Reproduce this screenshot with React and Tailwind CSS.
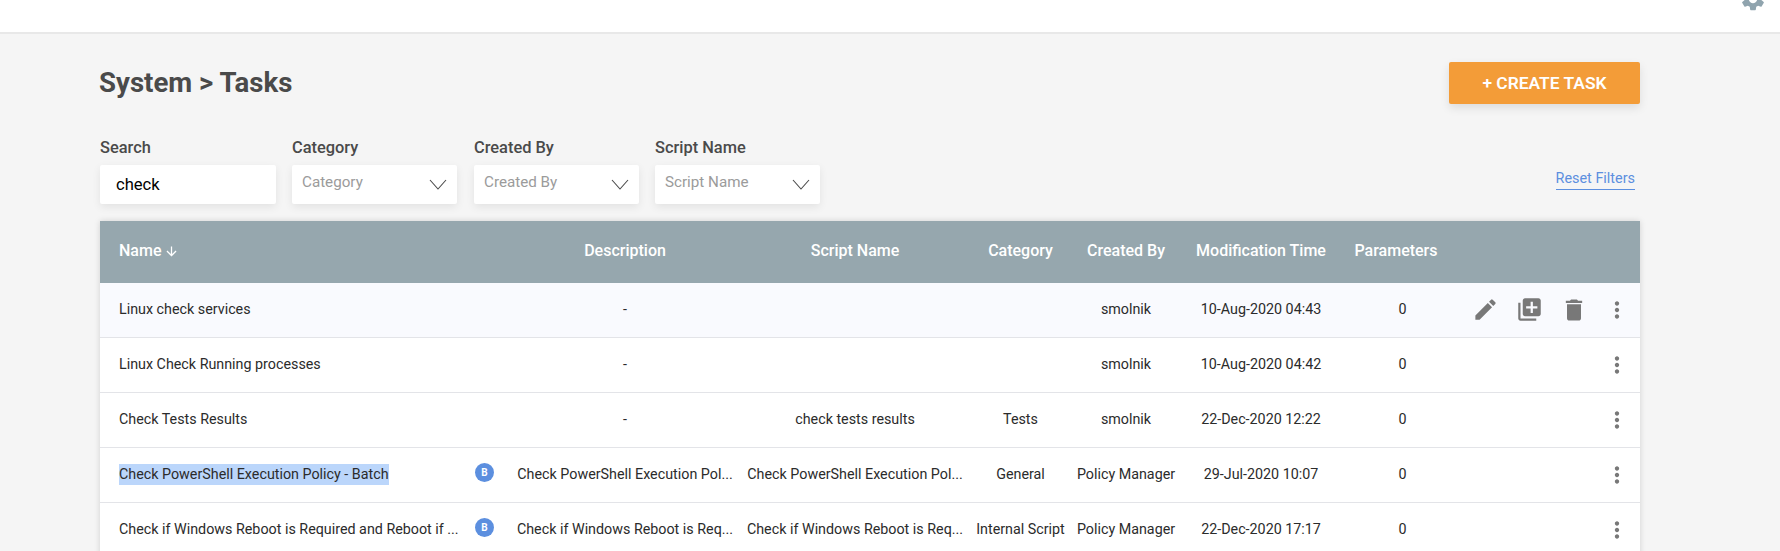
import React from 'react'
import { MdEdit, MdLibraryAdd, MdDelete, MdMoreVert, MdSettings, MdArrowDownward } from 'react-icons/md'

const rows = [
  { name: 'Linux check services', desc: '-', script: '', category: '', by: 'smolnik', time: '10-Aug-2020 04:43', params: 0, hover: true },
  { name: 'Linux Check Running processes', desc: '-', script: '', category: '', by: 'smolnik', time: '10-Aug-2020 04:42', params: 0 },
  { name: 'Check Tests Results', desc: '-', script: 'check tests results', category: 'Tests', by: 'smolnik', time: '22-Dec-2020 12:22', params: 0 },
  { name: 'Check PowerShell Execution Policy - Batch', badge: true, selected: true, desc: 'Check PowerShell Execution Pol...', script: 'Check PowerShell Execution Pol...', category: 'General', by: 'Policy Manager', time: '29-Jul-2020 10:07', params: 0 },
  { name: 'Check if Windows Reboot is Required and Reboot if ...', badge: true, desc: 'Check if Windows Reboot is Req...', script: 'Check if Windows Reboot is Req...', category: 'Internal Script', by: 'Policy Manager', time: '22-Dec-2020 17:17', params: 0 },
]

const gridCols = 'grid grid-cols-[410px_230px_230px_101px_110px_160px_123px_176px] items-center'

function Filter({ label, width }) {
  return (
    <div className={width}>
      <div className="text-[16.4px] leading-[19px] font-medium text-[#4a4a4a] mb-[8px]">{label}</div>
      <div className="h-[39px] bg-white rounded-[2px] shadow-[0_3px_8px_rgba(0,0,0,0.08)] flex items-center justify-between pl-[10px] pr-[10px]">
        <span className="text-[15.2px] text-[#9b9b9b] -mt-[5px]">{label}</span>
        <svg width="18" height="11" viewBox="0 0 18 11" fill="none" stroke="#4a4a4a" strokeWidth="1.1"><path d="M1 1l8 9 8-9" /></svg>
      </div>
    </div>
  )
}

function Row({ r }) {
  return (
    <div className={`${gridCols} h-[55px] pb-[1px] border-b border-[#e3e4e8] text-[14.3px] text-[#2b2b2b] text-center ${r.hover ? 'bg-[#f9fafe]' : 'bg-white'}`}>
      <div className="flex items-center justify-between pl-[19px] pr-[16px] text-left">
        <span className={r.selected ? 'inline-block bg-[#bbd6fb] leading-[21px]' : ''}>{r.name}</span>
        {r.badge && (
          <span className="w-[19px] h-[19px] -mt-[4px] rounded-full bg-[#5c8fdf] text-white text-[10px] font-bold flex items-center justify-center">B</span>
        )}
      </div>
      <div>{r.desc}</div>
      <div>{r.script}</div>
      <div>{r.category}</div>
      <div>{r.by}</div>
      <div>{r.time}</div>
      <div>{r.params}</div>
      <div className="flex items-center justify-end pr-[10px] text-[#787878]">
        {r.hover && (
          <div className="flex items-center gap-[17px] mr-[10px]">
            <MdEdit size={27} />
            <MdLibraryAdd size={27} />
            <MdDelete size={28} />
          </div>
        )}
        <MdMoreVert size={26} className="ml-[6px]" />
      </div>
    </div>
  )
}

export default function App() {
  return (
    <div className="w-[1780px] h-[551px] overflow-hidden bg-[#f5f5f5] font-['Roboto',sans-serif]">
      <div className="h-[34px] bg-white border-b-2 border-[#e8e8e8] relative overflow-hidden">
        <MdSettings size={28} className="absolute right-[13px] -top-[15px] text-[#90a4ae]" />
      </div>

      <div className="w-[1540px] ml-[100px]">
        <div className="flex items-start justify-between pt-[28px]">
          <h1 className="text-[27.6px] leading-[42px] font-bold text-[#4a4a4a] -ml-[1px]">System &gt; Tasks</h1>
          <button className="w-[191px] h-[42px] bg-[#f39c38] text-white text-[17.4px] font-semibold rounded-[2px] shadow-[0_4px_10px_rgba(0,0,0,0.1)]">+ CREATE TASK</button>
        </div>

        <div className="flex items-end justify-between mt-[34px]">
          <div className="flex items-end">
            <div className="w-[176px] mr-[16px]">
              <div className="text-[16.4px] leading-[19px] font-medium text-[#4a4a4a] mb-[8px]">Search</div>
              <div className="h-[39px] pt-[2px] bg-white rounded-[2px] shadow-[0_3px_8px_rgba(0,0,0,0.08)] flex items-center pl-[16px] text-[16.6px] text-black">check</div>
            </div>
            <Filter label="Category" width="w-[165px] mr-[17px]" />
            <Filter label="Created By" width="w-[165px] mr-[16px]" />
            <Filter label="Script Name" width="w-[165px]" />
          </div>
          <a className="mr-[5px] mb-[14px] text-[14.4px] leading-[20px] text-[#5c8fdf] border-b border-[#5c8fdf]">Reset Filters</a>
        </div>

        <div className="mt-[17px] shadow-[0_0_6px_rgba(0,0,0,0.15)]">
          <div className={`${gridCols} h-[62px] pb-[2px] bg-[#96a7ae] text-white text-[16px] font-medium text-center`}>
            <div className="pl-[19px] text-left flex items-center gap-[3px]">Name <MdArrowDownward size={15} className="mt-[1px]" /></div>
            <div>Description</div>
            <div>Script Name</div>
            <div>Category</div>
            <div>Created By</div>
            <div>Modification Time</div>
            <div className="pr-[13px]">Parameters</div>
            <div />
          </div>
          {rows.map(r => <Row key={r.name} r={r} />)}
        </div>
      </div>
    </div>
  )
}
